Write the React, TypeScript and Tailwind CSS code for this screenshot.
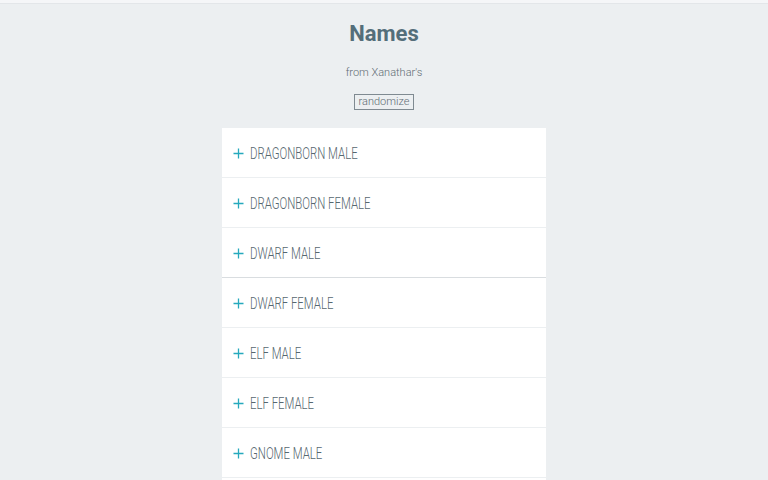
const groups = [
  "Dragonborn Male",
  "Dragonborn Female",
  "Dwarf Male",
  "Dwarf Female",
  "Elf Male",
  "Elf Female",
  "Gnome Male",
  "Gnome Female",
];

const NameRow = ({ label, strong }: { label: string; strong?: boolean }) => (
  <div
    className={`flex h-[50px] items-center gap-[6px] border-b px-[11px] pt-[3px] ${
      strong ? "border-[#d9dde0]" : "border-[#eceff1]"
    }`}
  >
    <svg width="11" height="11" viewBox="0 0 11 11" className="mb-[2px] shrink-0">
      <path d="M5.5 0.5v10M0.5 5.5h10" stroke="#26a9bd" strokeWidth="1.3" />
    </svg>
    <span className="inline-block origin-left scale-x-[0.69] whitespace-nowrap text-[16.5px] font-light uppercase text-[#56676f]">
      {label}
    </span>
  </div>
);

export default function App() {
  return (
    <div className="h-[480px] overflow-hidden bg-[#eceff1] font-['Roboto',sans-serif]">
      <div className="h-[4px] border-b border-[#e3e6e9] bg-[#f5f6f8]" />
      <header className="flex flex-col items-center pt-[15px]">
        <h1 className="text-[22px] font-bold leading-[30px] text-[#546e7a]">Names</h1>
        <p className="mt-[17px] text-[11px] font-light leading-[13px] text-[#5f6c74]">from Xanathar's</p>
        <button className="mt-[15px] border border-[#7f8a91] px-[4px] text-[11px] font-light leading-[14px] text-[#5f6c74]">
          randomize
        </button>
      </header>
      <main className="mx-auto mt-[18px] w-[324px] bg-white">
        {groups.map((g, i) => (
          <NameRow key={g} label={g} strong={i === 2} />
        ))}
      </main>
    </div>
  );
}
